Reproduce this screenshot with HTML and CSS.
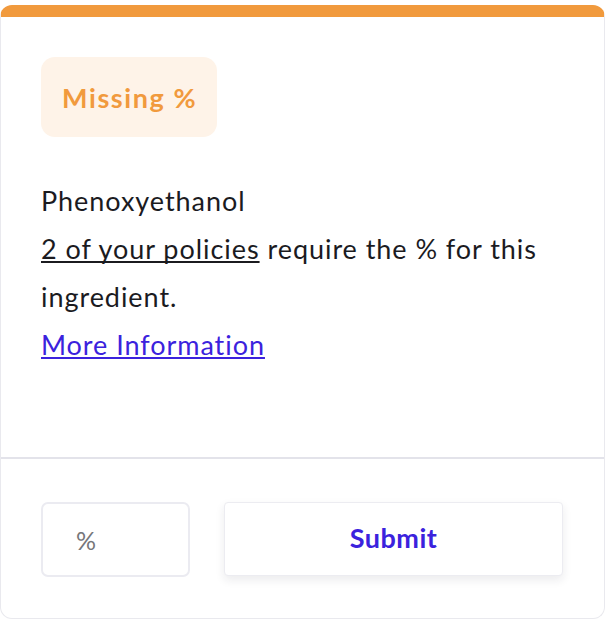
FILE: index.html
```html
<!DOCTYPE html>
<html lang="en">
<head>
<meta charset="utf-8">
<title>Missing %</title>
<link rel="stylesheet" href="styles.css">
</head>
<body>
<div class="card">
  <div class="card-body">
    <div class="badge">Missing %</div>
    <div class="info">
      <div>Phenoxyethanol</div>
      <div><a class="policies" href="#">2 of your policies</a> <span>require the % for this</span> <span>ingredient.</span></div>
      <a class="more" href="#">More Information</a>
    </div>
  </div>
  <div class="card-footer">
    <input class="pct" type="text" placeholder="%">
    <button class="submit" type="button">Submit</button>
  </div>
</div>
</body>
</html>
```
FILE: styles.css
```css
html, body {
  margin: 0;
  padding: 0;
  background: #ffffff;
}
body {
  font-family: Lato, "Noto Sans", sans-serif;
  font-variant-ligatures: none;
  color: #1b1b1f;
  padding-top: 5px;
}
.card {
  box-sizing: border-box;
  width: 605px;
  height: 614px;
  border: 1px solid #e9e9ee;
  border-top: 12px solid #f19a3d;
  border-radius: 12px;
  background: #fff;
  display: flex;
  flex-direction: column;
}
.card-body {
  padding: 40px 40px 0 40px;
  flex: 1;
  border-bottom: 2px solid #e3e3ea;
}
.badge {
  display: inline-flex;
  align-items: center;
  height: 80px;
  padding: 0 20px 0 21px;
  border-radius: 14px;
  background: #fef3e8;
  color: #f19a3d;
  font-weight: 700;
  font-size: 27px;
  letter-spacing: 1.6px;
  box-sizing: border-box;
}
.info {
  margin-top: 40px;
  font-size: 27px;
  line-height: 48px;
  letter-spacing: 0.95px;
}
.policies {
  color: #1b1b1f;
  text-decoration: underline;
  text-underline-offset: 2px;
  text-decoration-thickness: 2px;
  text-decoration-skip-ink: none;
}
.more {
  color: #3b22dd;
  text-decoration: underline;
  text-underline-offset: 2px;
  text-decoration-thickness: 2px;
  text-decoration-skip-ink: none;
}
.card-footer {
  display: flex;
  gap: 34px;
  padding: 43px 41px 41px 40px;
}
.pct {
  box-sizing: border-box;
  width: 149px;
  height: 75px;
  border: 2px solid #ebebf1;
  border-radius: 7px;
  padding: 0 0 0 33px;
  font-family: Lato, "Noto Sans", sans-serif;
  font-size: 25px;
  color: #333;
  outline: none;
}
.pct::placeholder {
  color: #76767a;
}
.submit {
  flex: 1;
  height: 74px;
  padding: 0 0 3px 0;
  border: 1px solid #ececf1;
  border-radius: 4px;
  background: #fff;
  box-shadow: 0 4px 10px rgba(30, 30, 60, 0.09);
  color: #3b22dd;
  font-family: Lato, "Noto Sans", sans-serif;
  font-weight: 700;
  font-size: 27px;
  letter-spacing: 0.5px;
  cursor: pointer;
}
```
